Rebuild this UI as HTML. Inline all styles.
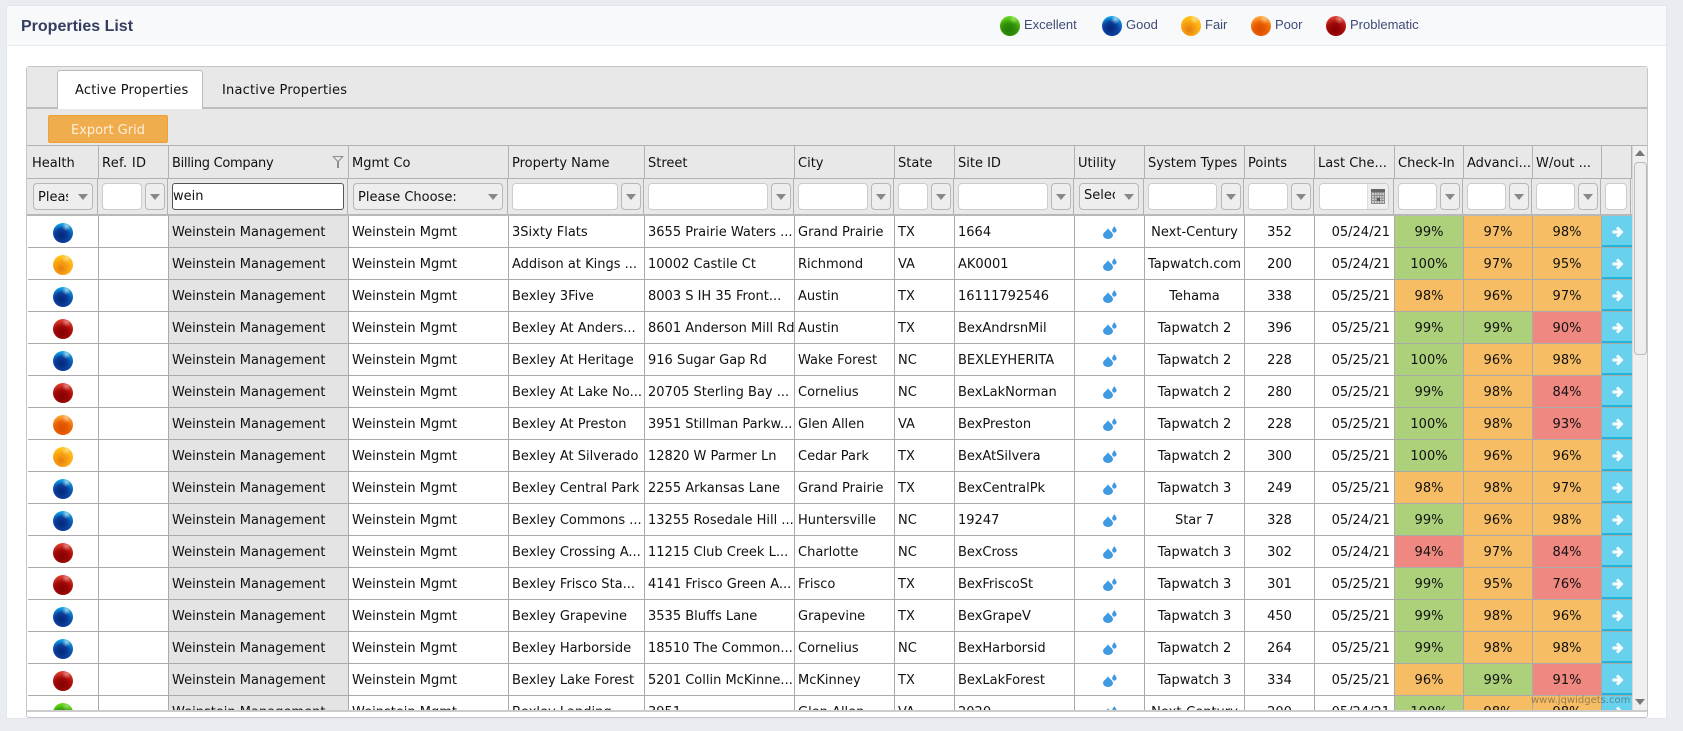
<!DOCTYPE html>
<html>
<head>
<meta charset="utf-8">
<title>Properties List</title>
<style>
html,body{margin:0;padding:0;width:1683px;height:731px;overflow:hidden;background:#e9edf2;}
*{box-sizing:border-box;}
.abs,.panel,.head,.tab,.hl,.fl,.ht,.i,.b{position:absolute;}
.panel{left:6px;top:5px;width:1661px;height:714px;background:#fff;border:1px solid #e3e7ec;}
.head{left:6px;top:5px;width:1661px;height:41px;background:#f8f9fb;border:1px solid #e3e7ec;border-bottom:1px solid #e7eaee;}
.title{position:absolute;left:21px;top:17px;font:bold 16px/20px "Liberation Sans",sans-serif;color:#353d60;}
.lg{position:absolute;top:17px;font:13px/16px "Liberation Sans",sans-serif;color:#3f4a75;}
.sp{display:block;width:20px;height:20px;border-radius:50%;}
.blue{background:radial-gradient(circle at 68% 16%,rgba(255,255,255,.6) 0,rgba(255,255,255,0) 22%),radial-gradient(circle at 42% 62%,#06267c 0,#0a3a94 34%,rgba(10,70,160,0) 62%),linear-gradient(#10a4e8,#0d62bc 55%,#0c409e);}
.yellow{background:radial-gradient(circle at 68% 16%,rgba(255,255,255,.45) 0,rgba(255,255,255,0) 22%),radial-gradient(circle at 40% 68%,#e67c0e 0,#f49a10 30%,rgba(248,170,16,0) 62%),linear-gradient(#ffc21a,#ffb414 60%,#ffc43a);}
.orange{background:radial-gradient(circle at 68% 16%,rgba(255,255,255,.4) 0,rgba(255,255,255,0) 22%),radial-gradient(circle at 45% 68%,#d84c00 0,#e85c02 35%,rgba(235,95,2,0) 65%),linear-gradient(#ffa63a,#f47a0c 55%,#f06a04);}
.red{background:radial-gradient(circle at 68% 16%,rgba(255,255,255,.4) 0,rgba(255,255,255,0) 22%),radial-gradient(circle at 45% 70%,#860000 0,#9a0806 35%,rgba(160,10,8,0) 65%),linear-gradient(#dc3e32,#bb1a14 55%,#a80e0a);}
.green{background:radial-gradient(circle at 68% 16%,rgba(255,255,255,.35) 0,rgba(255,255,255,0) 22%),radial-gradient(circle at 45% 70%,#247a06 0,#2e8e08 35%,rgba(50,150,10,0) 65%),linear-gradient(#62d816,#44ae0c 55%,#3aa00a);}
.grid{position:absolute;left:0;top:0;width:1683px;height:731px;font:13px/16px "DejaVu Sans","Liberation Sans",sans-serif;color:#111;}
.frame{position:absolute;left:26px;top:66px;width:1622px;height:652px;background:#fff;border:1px solid #c6c6c6;border-radius:3px;}
.bar{position:absolute;left:27px;width:1620px;background:#e8e8e8;}
.tab{left:57px;top:70px;width:146px;height:40px;background:#fff;border:1px solid #bbb;border-bottom:0;border-radius:3px 3px 0 0;padding-left:17px;line-height:40px;letter-spacing:.2px;white-space:nowrap;}
.tt{position:absolute;left:222px;top:71px;line-height:40px;letter-spacing:.2px;}
.btn{position:absolute;left:48px;top:115px;width:120px;height:28px;background:#f0ad4e;border:1px solid #eea236;border-radius:2px;color:#fbeed9;text-align:center;line-height:29px;}
.hl{top:145px;height:33px;width:1px;background:#b2b2b2;}
.fl{top:178px;height:36px;width:1px;background:#b2b2b2;}
.ht{top:156px;white-space:nowrap;}
.i{top:183px;height:27px;background:#fff;border:1px solid #ccc;border-radius:4px;}
.b{top:183px;height:27px;background:#eee;border:1px solid #b8b8b8;border-radius:4px;overflow:hidden;line-height:28px;padding-left:5px;white-space:nowrap;}
.b::after{content:"";position:absolute;right:4px;top:10px;border-left:5px solid transparent;border-right:5px solid transparent;border-top:6px solid #888;}
.b .clip{display:block;overflow:hidden;}
.rows{position:absolute;left:28px;top:216px;width:1604px;height:494px;overflow:hidden;background:#fff;}
table{border-collapse:separate;border-spacing:0;table-layout:fixed;width:1604px;}
td{height:32px;padding:2px 0 0 3px;border-right:1px solid #aaa;border-bottom:1px solid #aaa;white-space:nowrap;overflow:hidden;vertical-align:middle;}
td:nth-child(1){padding:2px 0 0;}
td:nth-child(1) .sp{margin:0 0 0 25px;}
td:nth-child(3){background:#e4e4e4;}
td:nth-child(10),td:nth-child(11),td:nth-child(12){padding:2px 0 0;text-align:center;}
td:nth-child(13){padding:2px 4px 0 0;text-align:right;}
td:nth-child(14),td:nth-child(15),td:nth-child(16){padding:2px 0 0;text-align:center;}
td:nth-child(17){padding:0;border-right:0;background:#68d2ee;position:relative;}
.g{background:#acd17a;}
.o{background:#f6bd64;}
.r{background:#ee8880;}
.ar{position:absolute;left:0;right:0;top:0;bottom:0;border-bottom:2px solid #23b5d9;}
.ar svg{position:absolute;left:10px;top:10px;}
svg.d{display:block;margin:0 auto;}
.sb{position:absolute;left:1632px;top:146px;width:15px;height:564px;background:#f0f0f0;border-left:1px solid #d8d8d8;}
.thumb{position:absolute;left:1634px;top:162px;width:13px;height:193px;background:#eee;border:1px solid #bbb;border-radius:4px;}
.tri{position:absolute;left:1635px;border-left:5px solid transparent;border-right:5px solid transparent;}
.foot{position:absolute;left:27px;top:710px;width:1620px;height:2px;background:#ccc;}
.wm{position:absolute;left:1531px;top:694px;font:10px/14px "DejaVu Sans",sans-serif;color:rgba(60,60,60,.5);white-space:nowrap;}
</style>
</head>
<body>
<svg width="0" height="0" style="position:absolute">
<symbol id="drop" viewBox="0 0 14 13"><path d="M5 2C5.500 4.500 10 6 10 9a5 4 0 0 1-10 0C0 6 4.500 4.500 5 2Z" fill="#3f9ade"/><path d="M11.300 0c.5 1.400 2.300 2.600 2.300 4.400a2.200 2.200 0 0 1-4.400 0C9.200 2.600 10.800 1.400 11.300 0Z" fill="#3f9ade"/></symbol>
<symbol id="arrow" viewBox="0 0 12 12"><path d="M6 .5 11.500 6 6 11.500 4 9.500 6 7.500H.5V4.500H6L4 2.500Z" fill="#fff"/></symbol>
</svg>

<div class="panel"></div>
<div class="head"></div>
<div class="title">Properties List</div>
<span class="sp green" style="position:absolute;left:1000px;top:16px"></span><span class="lg" style="left:1024px">Excellent</span>
<span class="sp blue" style="position:absolute;left:1102px;top:16px"></span><span class="lg" style="left:1126px">Good</span>
<span class="sp yellow" style="position:absolute;left:1181px;top:16px"></span><span class="lg" style="left:1205px">Fair</span>
<span class="sp orange" style="position:absolute;left:1251px;top:16px"></span><span class="lg" style="left:1275px">Poor</span>
<span class="sp red" style="position:absolute;left:1326px;top:16px"></span><span class="lg" style="left:1350px">Problematic</span>

<div class="grid">
<div class="frame"></div>
<div class="bar" style="top:67px;height:42px;border-bottom:2px solid #bdbdbd"></div>
<div class="tab">Active Properties</div>
<div class="tt">Inactive Properties</div>
<div class="bar" style="top:109px;height:36px"></div>
<div class="btn">Export Grid</div>
<div class="bar" style="top:145px;height:34px;border-top:1px solid #b2b2b2;border-bottom:1px solid #b2b2b2"></div>
<div class="bar" style="top:179px;height:37px;border-bottom:2px solid #b8b8b8"></div>

<div class="hl" style="left:98px"></div><div class="hl" style="left:168px"></div><div class="hl" style="left:348px"></div><div class="hl" style="left:508px"></div><div class="hl" style="left:644px"></div><div class="hl" style="left:794px"></div><div class="hl" style="left:894px"></div><div class="hl" style="left:954px"></div><div class="hl" style="left:1074px"></div><div class="hl" style="left:1144px"></div><div class="hl" style="left:1244px"></div><div class="hl" style="left:1314px"></div><div class="hl" style="left:1394px"></div><div class="hl" style="left:1463px"></div><div class="hl" style="left:1532px"></div><div class="hl" style="left:1601px"></div><div class="hl" style="left:1631px"></div>
<div class="fl" style="left:97px"></div><div class="fl" style="left:167px"></div><div class="fl" style="left:347px"></div><div class="fl" style="left:507px"></div><div class="fl" style="left:643px"></div><div class="fl" style="left:793px"></div><div class="fl" style="left:893px"></div><div class="fl" style="left:953px"></div><div class="fl" style="left:1073px"></div><div class="fl" style="left:1143px"></div><div class="fl" style="left:1243px"></div><div class="fl" style="left:1313px"></div><div class="fl" style="left:1393px"></div><div class="fl" style="left:1462px"></div><div class="fl" style="left:1531px"></div><div class="fl" style="left:1600px"></div><div class="fl" style="left:1630px"></div>

<span class="ht" style="left:32px">Health</span>
<span class="ht" style="left:102px;letter-spacing:.3px">Ref. ID</span>
<span class="ht" style="left:172px;letter-spacing:-.3px">Billing Company</span>
<svg class="abs" style="left:332px;top:156px" width="12" height="12" viewBox="0 0 12 12"><path d="M0 0H12L7 5.500V12H5V5.500Z" fill="#8f8f8f"/><path d="M2.500 1 6 5 9.500 1Z" fill="#e8e8e8"/></svg>
<span class="ht" style="left:352px">Mgmt Co</span>
<span class="ht" style="left:512px">Property Name</span>
<span class="ht" style="left:648px">Street</span>
<span class="ht" style="left:798px">City</span>
<span class="ht" style="left:898px">State</span>
<span class="ht" style="left:958px">Site ID</span>
<span class="ht" style="left:1078px">Utility</span>
<span class="ht" style="left:1148px">System Types</span>
<span class="ht" style="left:1248px">Points</span>
<span class="ht" style="left:1318px">Last Che...</span>
<span class="ht" style="left:1398px">Check-In</span>
<span class="ht" style="left:1467px">Advanci...</span>
<span class="ht" style="left:1536px">W/out ...</span>

<div class="b" style="left:33px;width:60px;padding-left:4px"><span class="clip" style="width:30px">Please Choose:</span></div>
<div class="i" style="left:102px;width:40px"></div><div class="b" style="left:145px;width:20px;padding:0"></div>
<div class="i" style="left:172px;width:172px;border:1px solid #555;border-radius:3px;line-height:26px;padding-left:0">wein</div>
<div class="b" style="left:353px;width:150px;padding-left:4px">Please Choose:</div>
<div class="i" style="left:512px;width:106px"></div><div class="b" style="left:621px;width:20px;padding:0"></div>
<div class="i" style="left:648px;width:120px"></div><div class="b" style="left:771px;width:20px;padding:0"></div>
<div class="i" style="left:798px;width:70px"></div><div class="b" style="left:871px;width:20px;padding:0"></div>
<div class="i" style="left:898px;width:30px"></div><div class="b" style="left:931px;width:20px;padding:0"></div>
<div class="i" style="left:958px;width:90px"></div><div class="b" style="left:1051px;width:20px;padding:0"></div>
<div class="b" style="left:1079px;width:60px;padding-left:4px;line-height:23px"><span class="clip" style="width:31px">Select</span></div>
<div class="i" style="left:1148px;width:69px"></div><div class="b" style="left:1221px;width:20px;padding:0"></div>
<div class="i" style="left:1248px;width:40px"></div><div class="b" style="left:1291px;width:20px;padding:0"></div>
<div class="i" style="left:1319px;width:70px;overflow:hidden"><div style="position:absolute;left:47px;top:0;width:22px;height:25px;background:#eee;border-left:1px solid #ddd"></div></div>
<svg class="abs" style="left:1371px;top:189px" width="14" height="15" viewBox="0 0 14 15"><rect width="14" height="15" fill="#8a8a8a"/><rect width="14" height="3" fill="#666"/><path d="M1 4H13V14H1Z" fill="#cfcfcf"/><path d="M3.500 3V15M6 3V15M8.500 3V15M11 3V15M0 6.500H14M0 9H14M0 11.500H14" stroke="#8f8f8f" stroke-width="1"/><rect x="6" y="9" width="3" height="3" fill="#555"/></svg>
<div class="i" style="left:1398px;width:39px"></div><div class="b" style="left:1440px;width:20px;padding:0"></div>
<div class="i" style="left:1467px;width:39px"></div><div class="b" style="left:1509px;width:20px;padding:0"></div>
<div class="i" style="left:1536px;width:39px"></div><div class="b" style="left:1578px;width:20px;padding:0"></div>
<div class="i" style="left:1605px;width:22px"></div>

<div class="rows">
<table>
<colgroup><col style="width:71px"><col style="width:70px"><col style="width:180px"><col style="width:160px"><col style="width:136px"><col style="width:150px"><col style="width:100px"><col style="width:60px"><col style="width:120px"><col style="width:70px"><col style="width:100px"><col style="width:70px"><col style="width:80px"><col style="width:69px"><col style="width:69px"><col style="width:69px"><col style="width:30px"></colgroup>
<tr><td><span class="sp blue"></span></td><td></td><td>Weinstein Management</td><td>Weinstein Mgmt</td><td>3Sixty Flats</td><td>3655 Prairie Waters ...</td><td>Grand Prairie</td><td>TX</td><td>1664</td><td><svg class="d" width="14" height="13"><use href="#drop"/></svg></td><td>Next-Century</td><td>352</td><td>05/24/21</td><td class="g">99%</td><td class="o">97%</td><td class="o">98%</td><td><div class="ar"><svg width="12" height="12"><use href="#arrow"/></svg></div></td></tr>
<tr><td><span class="sp yellow"></span></td><td></td><td>Weinstein Management</td><td>Weinstein Mgmt</td><td>Addison at Kings ...</td><td>10002 Castile Ct</td><td>Richmond</td><td>VA</td><td>AK0001</td><td><svg class="d" width="14" height="13"><use href="#drop"/></svg></td><td>Tapwatch.com</td><td>200</td><td>05/24/21</td><td class="g">100%</td><td class="o">97%</td><td class="o">95%</td><td><div class="ar"><svg width="12" height="12"><use href="#arrow"/></svg></div></td></tr>
<tr><td><span class="sp blue"></span></td><td></td><td>Weinstein Management</td><td>Weinstein Mgmt</td><td>Bexley 3Five</td><td>8003 S IH 35 Front...</td><td>Austin</td><td>TX</td><td>16111792546</td><td><svg class="d" width="14" height="13"><use href="#drop"/></svg></td><td>Tehama</td><td>338</td><td>05/25/21</td><td class="o">98%</td><td class="o">96%</td><td class="o">97%</td><td><div class="ar"><svg width="12" height="12"><use href="#arrow"/></svg></div></td></tr>
<tr><td><span class="sp red"></span></td><td></td><td>Weinstein Management</td><td>Weinstein Mgmt</td><td>Bexley At Anders...</td><td>8601 Anderson Mill Rd</td><td>Austin</td><td>TX</td><td>BexAndrsnMil</td><td><svg class="d" width="14" height="13"><use href="#drop"/></svg></td><td>Tapwatch 2</td><td>396</td><td>05/25/21</td><td class="g">99%</td><td class="g">99%</td><td class="r">90%</td><td><div class="ar"><svg width="12" height="12"><use href="#arrow"/></svg></div></td></tr>
<tr><td><span class="sp blue"></span></td><td></td><td>Weinstein Management</td><td>Weinstein Mgmt</td><td>Bexley At Heritage</td><td>916 Sugar Gap Rd</td><td>Wake Forest</td><td>NC</td><td>BEXLEYHERITA</td><td><svg class="d" width="14" height="13"><use href="#drop"/></svg></td><td>Tapwatch 2</td><td>228</td><td>05/25/21</td><td class="g">100%</td><td class="o">96%</td><td class="o">98%</td><td><div class="ar"><svg width="12" height="12"><use href="#arrow"/></svg></div></td></tr>
<tr><td><span class="sp red"></span></td><td></td><td>Weinstein Management</td><td>Weinstein Mgmt</td><td>Bexley At Lake No...</td><td>20705 Sterling Bay ...</td><td>Cornelius</td><td>NC</td><td>BexLakNorman</td><td><svg class="d" width="14" height="13"><use href="#drop"/></svg></td><td>Tapwatch 2</td><td>280</td><td>05/25/21</td><td class="g">99%</td><td class="o">98%</td><td class="r">84%</td><td><div class="ar"><svg width="12" height="12"><use href="#arrow"/></svg></div></td></tr>
<tr><td><span class="sp orange"></span></td><td></td><td>Weinstein Management</td><td>Weinstein Mgmt</td><td>Bexley At Preston</td><td>3951 Stillman Parkw...</td><td>Glen Allen</td><td>VA</td><td>BexPreston</td><td><svg class="d" width="14" height="13"><use href="#drop"/></svg></td><td>Tapwatch 2</td><td>228</td><td>05/25/21</td><td class="g">100%</td><td class="o">98%</td><td class="r">93%</td><td><div class="ar"><svg width="12" height="12"><use href="#arrow"/></svg></div></td></tr>
<tr><td><span class="sp yellow"></span></td><td></td><td>Weinstein Management</td><td>Weinstein Mgmt</td><td>Bexley At Silverado</td><td>12820 W Parmer Ln</td><td>Cedar Park</td><td>TX</td><td>BexAtSilvera</td><td><svg class="d" width="14" height="13"><use href="#drop"/></svg></td><td>Tapwatch 2</td><td>300</td><td>05/25/21</td><td class="g">100%</td><td class="o">96%</td><td class="o">96%</td><td><div class="ar"><svg width="12" height="12"><use href="#arrow"/></svg></div></td></tr>
<tr><td><span class="sp blue"></span></td><td></td><td>Weinstein Management</td><td>Weinstein Mgmt</td><td>Bexley Central Park</td><td>2255 Arkansas Lane</td><td>Grand Prairie</td><td>TX</td><td>BexCentralPk</td><td><svg class="d" width="14" height="13"><use href="#drop"/></svg></td><td>Tapwatch 3</td><td>249</td><td>05/25/21</td><td class="o">98%</td><td class="o">98%</td><td class="o">97%</td><td><div class="ar"><svg width="12" height="12"><use href="#arrow"/></svg></div></td></tr>
<tr><td><span class="sp blue"></span></td><td></td><td>Weinstein Management</td><td>Weinstein Mgmt</td><td>Bexley Commons ...</td><td>13255 Rosedale Hill ...</td><td>Huntersville</td><td>NC</td><td>19247</td><td><svg class="d" width="14" height="13"><use href="#drop"/></svg></td><td>Star 7</td><td>328</td><td>05/24/21</td><td class="g">99%</td><td class="o">96%</td><td class="o">98%</td><td><div class="ar"><svg width="12" height="12"><use href="#arrow"/></svg></div></td></tr>
<tr><td><span class="sp red"></span></td><td></td><td>Weinstein Management</td><td>Weinstein Mgmt</td><td>Bexley Crossing A...</td><td>11215 Club Creek L...</td><td>Charlotte</td><td>NC</td><td>BexCross</td><td><svg class="d" width="14" height="13"><use href="#drop"/></svg></td><td>Tapwatch 3</td><td>302</td><td>05/24/21</td><td class="r">94%</td><td class="o">97%</td><td class="r">84%</td><td><div class="ar"><svg width="12" height="12"><use href="#arrow"/></svg></div></td></tr>
<tr><td><span class="sp red"></span></td><td></td><td>Weinstein Management</td><td>Weinstein Mgmt</td><td>Bexley Frisco Sta...</td><td>4141 Frisco Green A...</td><td>Frisco</td><td>TX</td><td>BexFriscoSt</td><td><svg class="d" width="14" height="13"><use href="#drop"/></svg></td><td>Tapwatch 3</td><td>301</td><td>05/25/21</td><td class="g">99%</td><td class="o">95%</td><td class="r">76%</td><td><div class="ar"><svg width="12" height="12"><use href="#arrow"/></svg></div></td></tr>
<tr><td><span class="sp blue"></span></td><td></td><td>Weinstein Management</td><td>Weinstein Mgmt</td><td>Bexley Grapevine</td><td>3535 Bluffs Lane</td><td>Grapevine</td><td>TX</td><td>BexGrapeV</td><td><svg class="d" width="14" height="13"><use href="#drop"/></svg></td><td>Tapwatch 3</td><td>450</td><td>05/25/21</td><td class="g">99%</td><td class="o">98%</td><td class="o">96%</td><td><div class="ar"><svg width="12" height="12"><use href="#arrow"/></svg></div></td></tr>
<tr><td><span class="sp blue"></span></td><td></td><td>Weinstein Management</td><td>Weinstein Mgmt</td><td>Bexley Harborside</td><td>18510 The Common...</td><td>Cornelius</td><td>NC</td><td>BexHarborsid</td><td><svg class="d" width="14" height="13"><use href="#drop"/></svg></td><td>Tapwatch 2</td><td>264</td><td>05/25/21</td><td class="g">99%</td><td class="o">98%</td><td class="o">98%</td><td><div class="ar"><svg width="12" height="12"><use href="#arrow"/></svg></div></td></tr>
<tr><td><span class="sp red"></span></td><td></td><td>Weinstein Management</td><td>Weinstein Mgmt</td><td>Bexley Lake Forest</td><td>5201 Collin McKinne...</td><td>McKinney</td><td>TX</td><td>BexLakForest</td><td><svg class="d" width="14" height="13"><use href="#drop"/></svg></td><td>Tapwatch 3</td><td>334</td><td>05/25/21</td><td class="o">96%</td><td class="g">99%</td><td class="r">91%</td><td><div class="ar"><svg width="12" height="12"><use href="#arrow"/></svg></div></td></tr>
<tr><td><span class="sp green"></span></td><td></td><td>Weinstein Management</td><td>Weinstein Mgmt</td><td>Bexley Landing</td><td>3951</td><td>Glen Allen</td><td>VA</td><td>2020</td><td><svg class="d" width="14" height="13"><use href="#drop"/></svg></td><td>Next-Century</td><td>200</td><td>05/24/21</td><td class="g">100%</td><td class="o">98%</td><td class="o">98%</td><td><div class="ar"><svg width="12" height="12"><use href="#arrow"/></svg></div></td></tr>
</table>
</div>

<div class="wm">www.jqwidgets.com</div>
<div class="sb"></div>
<div class="tri" style="top:150px;border-bottom:6px solid #777"></div>
<div class="thumb"></div>
<div class="tri" style="top:699px;border-top:6px solid #777"></div>
<div class="foot"></div>
</div>
</body>
</html>
